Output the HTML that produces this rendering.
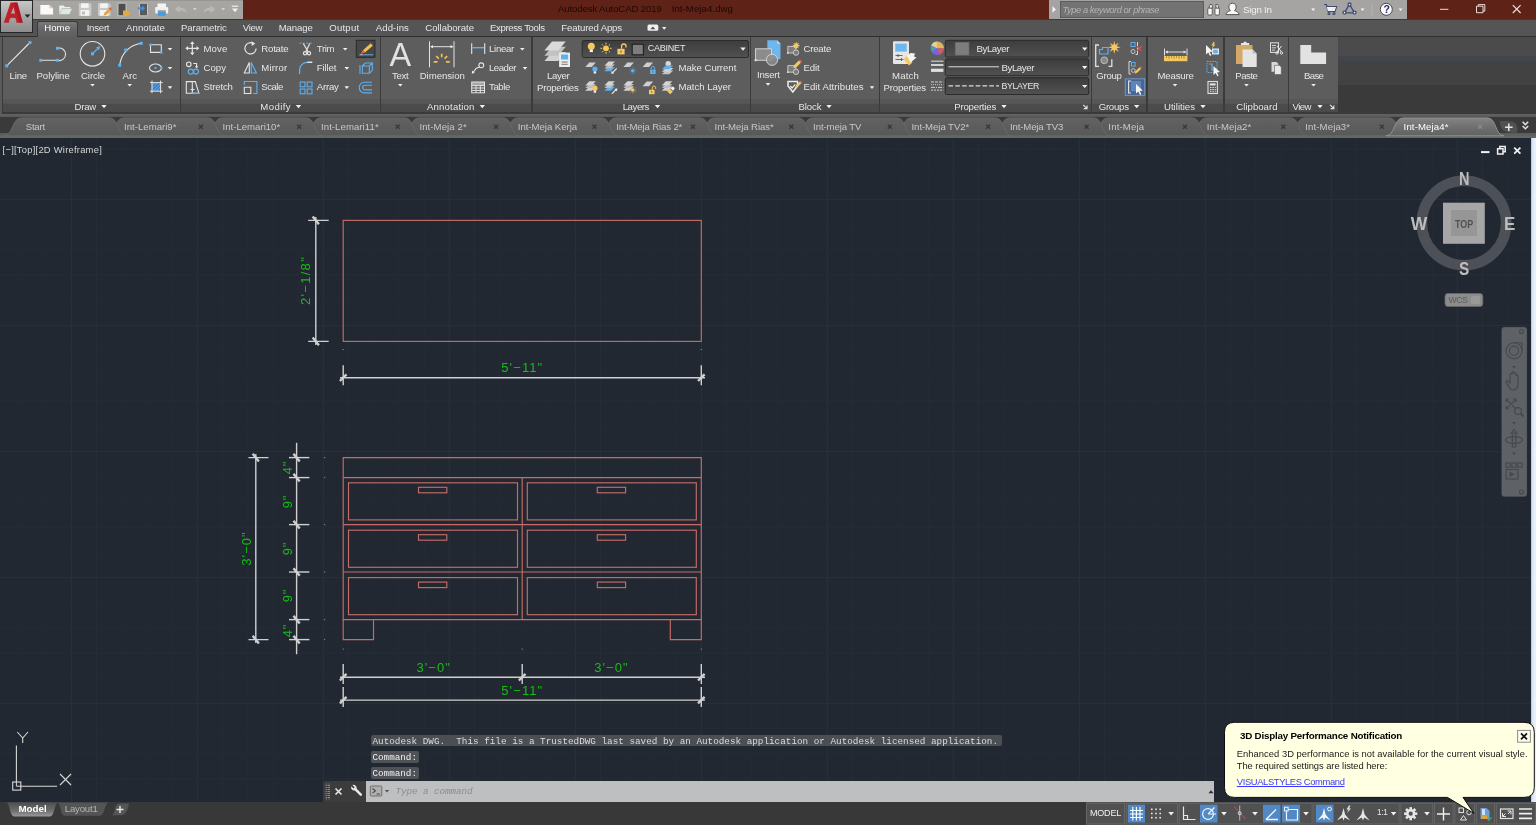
<!DOCTYPE html>
<html>
<head>
<meta charset="utf-8">
<title>Autodesk AutoCAD 2019 - Int-Meja4.dwg</title>
<style>
html,body{margin:0;padding:0;background:#212832;overflow:hidden}
#app{filter:blur(0.4px);position:relative;width:1536px;height:825px;overflow:hidden;background:#212832;font-family:"Liberation Sans",sans-serif}
.a{position:absolute}
.t{position:absolute;white-space:pre;font-family:"Liberation Sans",sans-serif}
.m{font-family:"Liberation Mono",monospace}
svg{position:absolute;overflow:visible}
</style>
</head>
<body>
<div id="app">

<!-- title bar -->
<div class="a" style="left:0;top:0;width:1536px;height:19px;background:#5f2216"></div>
<div class="a" style="left:0;top:19px;width:1536px;height:17px;background:#555555;border-top:1px solid #3a3a3a;box-sizing:border-box"></div>
<!-- quick access toolbar -->
<div class="a" style="left:33px;top:0;width:209.5px;height:18.7px;background:linear-gradient(#8e8e8e,#a8a6a3 8%,#a5a3a0)"></div>
<!-- info center -->
<div class="a" style="left:1048.5px;top:0;width:358px;height:18.5px;background:#a6a4a2"></div>
<div class="a" style="left:1060px;top:1px;width:143.5px;height:16.5px;background:#737373;border:1px solid #5c5c5c;box-sizing:border-box"></div>
<!-- app button -->
<div class="a" style="left:0;top:0;width:32.5px;height:32.5px;background:linear-gradient(#c6c6c6,#a6a6a6 50%,#8c8c8c);border:1px solid #262626;box-sizing:border-box"></div>
<!-- ribbon body -->
<div class="a" style="left:0;top:35.5px;width:1536px;height:78.5px;background:#3a3a3a"></div>
<div class="a" style="left:0;top:35.5px;width:1536px;height:1px;background:#2f2f2f"></div>
<div class="a" style="left:1338px;top:36.5px;width:198px;height:19.5px;background:#4b4b4b"></div>
<div class="a" style="left:1338px;top:56px;width:198px;height:5px;background:#41464c"></div>
<div class="a" style="left:1338px;top:61px;width:198px;height:24px;background:#424242"></div>
<div class="a" style="left:1338px;top:85px;width:198px;height:28px;background:#3a3a3a"></div>
<div class="a" style="left:0;top:36.5px;width:2px;height:77px;background:#5a5a5a"></div>
<!-- home tab -->
<div class="a" style="left:37.4px;top:21.4px;width:40.5px;height:15.2px;background:linear-gradient(#7a7a7a,#686868 45%,#5e5e5e);border:1px solid #3a3a3a;border-bottom:none;border-radius:2.5px 2.5px 0 0;box-sizing:border-box"></div>

<!-- ribbon panels -->
<div class="a" style="left:2.5px;top:36.5px;width:177.5px;height:63px;background:#5d5d5d"></div>
<div class="a" style="left:2.5px;top:99.3px;width:177.5px;height:13.2px;background:linear-gradient(#575757,#565656 34%,#4b4b4b 38%,#4b4b4b 92%,#43474c)"></div>
<div class="a" style="left:181.3px;top:36.5px;width:198.7px;height:63px;background:#5d5d5d"></div>
<div class="a" style="left:181.3px;top:99.3px;width:198.7px;height:13.2px;background:linear-gradient(#575757,#565656 34%,#4b4b4b 38%,#4b4b4b 92%,#43474c)"></div>
<div class="a" style="left:381.3px;top:36.5px;width:150.0px;height:63px;background:#5d5d5d"></div>
<div class="a" style="left:381.3px;top:99.3px;width:150.0px;height:13.2px;background:linear-gradient(#575757,#565656 34%,#4b4b4b 38%,#4b4b4b 92%,#43474c)"></div>
<div class="a" style="left:532.7px;top:36.5px;width:217.3px;height:63px;background:#5d5d5d"></div>
<div class="a" style="left:532.7px;top:99.3px;width:217.3px;height:13.2px;background:linear-gradient(#575757,#565656 34%,#4b4b4b 38%,#4b4b4b 92%,#43474c)"></div>
<div class="a" style="left:751.3px;top:36.5px;width:127.4px;height:63px;background:#5d5d5d"></div>
<div class="a" style="left:751.3px;top:99.3px;width:127.4px;height:13.2px;background:linear-gradient(#575757,#565656 34%,#4b4b4b 38%,#4b4b4b 92%,#43474c)"></div>
<div class="a" style="left:880.0px;top:36.5px;width:211.0px;height:63px;background:#5d5d5d"></div>
<div class="a" style="left:880.0px;top:99.3px;width:211.0px;height:13.2px;background:linear-gradient(#575757,#565656 34%,#4b4b4b 38%,#4b4b4b 92%,#43474c)"></div>
<div class="a" style="left:1092.3px;top:36.5px;width:54.0px;height:63px;background:#5d5d5d"></div>
<div class="a" style="left:1092.3px;top:99.3px;width:54.0px;height:13.2px;background:linear-gradient(#575757,#565656 34%,#4b4b4b 38%,#4b4b4b 92%,#43474c)"></div>
<div class="a" style="left:1147.7px;top:36.5px;width:75.6px;height:63px;background:#5d5d5d"></div>
<div class="a" style="left:1147.7px;top:99.3px;width:75.6px;height:13.2px;background:linear-gradient(#575757,#565656 34%,#4b4b4b 38%,#4b4b4b 92%,#43474c)"></div>
<div class="a" style="left:1224.7px;top:36.5px;width:63.3px;height:63px;background:#5d5d5d"></div>
<div class="a" style="left:1224.7px;top:99.3px;width:63.3px;height:13.2px;background:linear-gradient(#575757,#565656 34%,#4b4b4b 38%,#4b4b4b 92%,#43474c)"></div>
<div class="a" style="left:1289.3px;top:36.5px;width:48.4px;height:63px;background:#5d5d5d"></div>
<div class="a" style="left:1289.3px;top:99.3px;width:48.4px;height:13.2px;background:linear-gradient(#575757,#565656 34%,#4b4b4b 38%,#4b4b4b 92%,#43474c)"></div>

<!-- file tab row -->
<div class="a" style="left:0;top:113.6px;width:1536px;height:3px;background:linear-gradient(#646464,#585858)"></div>
<div class="a" style="left:0;top:116.5px;width:1536px;height:19px;background:#3a3a3a"></div>
<div class="a" style="left:0;top:133px;width:1536px;height:5.3px;background:linear-gradient(#5a5a5a,#686868)"></div>

<svg style="left:0;top:0" width="1536" height="140" viewBox="0 0 1536 140">
<defs><linearGradient id="tg" x1="0" y1="0" x2="0" y2="1"><stop offset="0" stop-color="#626262"/><stop offset="1" stop-color="#585858"/></linearGradient>
<linearGradient id="tga" x1="0" y1="0" x2="0" y2="1"><stop offset="0" stop-color="#848484"/><stop offset="0.5" stop-color="#707070"/><stop offset="1" stop-color="#626262"/></linearGradient></defs>
<path d="M1287.5 135.8 C1297.1 135.8 1295.1 117.9 1304.8 117.9 L1389.2 117.9 C1398.4 117.9 1396.4 135.8 1405.7 135.8 Z" fill="url(#tg)" stroke="#6a6a6a" stroke-width="0.9"/>
<path d="M1189.0 135.8 C1198.7 135.8 1196.7 117.9 1206.3 117.9 L1290.7 117.9 C1300.0 117.9 1298.0 135.8 1307.2 135.8 Z" fill="url(#tg)" stroke="#6a6a6a" stroke-width="0.9"/>
<path d="M1090.6 135.8 C1100.3 135.8 1098.3 117.9 1107.9 117.9 L1192.3 117.9 C1201.6 117.9 1199.6 135.8 1208.8 135.8 Z" fill="url(#tg)" stroke="#6a6a6a" stroke-width="0.9"/>
<path d="M992.2 135.8 C1001.9 135.8 999.9 117.9 1009.5 117.9 L1093.9 117.9 C1103.2 117.9 1101.2 135.8 1110.4 135.8 Z" fill="url(#tg)" stroke="#6a6a6a" stroke-width="0.9"/>
<path d="M893.8 135.8 C903.4 135.8 901.4 117.9 911.1 117.9 L995.5 117.9 C1004.7 117.9 1002.7 135.8 1012.0 135.8 Z" fill="url(#tg)" stroke="#6a6a6a" stroke-width="0.9"/>
<path d="M795.4 135.8 C805.0 135.8 803.0 117.9 812.7 117.9 L897.1 117.9 C906.3 117.9 904.3 135.8 913.6 135.8 Z" fill="url(#tg)" stroke="#6a6a6a" stroke-width="0.9"/>
<path d="M696.9 135.8 C706.6 135.8 704.6 117.9 714.2 117.9 L798.6 117.9 C807.9 117.9 805.9 135.8 815.1 135.8 Z" fill="url(#tg)" stroke="#6a6a6a" stroke-width="0.9"/>
<path d="M598.5 135.8 C608.2 135.8 606.2 117.9 615.8 117.9 L700.2 117.9 C709.5 117.9 707.5 135.8 716.7 135.8 Z" fill="url(#tg)" stroke="#6a6a6a" stroke-width="0.9"/>
<path d="M500.1 135.8 C509.8 135.8 507.8 117.9 517.4 117.9 L601.8 117.9 C611.1 117.9 609.1 135.8 618.3 135.8 Z" fill="url(#tg)" stroke="#6a6a6a" stroke-width="0.9"/>
<path d="M401.7 135.8 C411.3 135.8 409.3 117.9 419.0 117.9 L503.4 117.9 C512.6 117.9 510.6 135.8 519.9 135.8 Z" fill="url(#tg)" stroke="#6a6a6a" stroke-width="0.9"/>
<path d="M303.3 135.8 C312.9 135.8 310.9 117.9 320.6 117.9 L405.0 117.9 C414.2 117.9 412.2 135.8 421.5 135.8 Z" fill="url(#tg)" stroke="#6a6a6a" stroke-width="0.9"/>
<path d="M204.8 135.8 C214.5 135.8 212.5 117.9 222.1 117.9 L306.5 117.9 C315.8 117.9 313.8 135.8 323.0 135.8 Z" fill="url(#tg)" stroke="#6a6a6a" stroke-width="0.9"/>
<path d="M106.4 135.8 C116.1 135.8 114.1 117.9 123.7 117.9 L208.1 117.9 C217.4 117.9 215.4 135.8 224.6 135.8 Z" fill="url(#tg)" stroke="#6a6a6a" stroke-width="0.9"/>
<path d="M3.7 135.8 C13.5 135.8 11.5 117.9 21.3 117.9 L109.7 117.9 C119.0 117.9 117.0 135.8 126.2 135.8 Z" fill="url(#tg)" stroke="#6a6a6a" stroke-width="0.9"/>
<path d="M1385.9 135.8 C1395.5 135.8 1393.5 117.9 1403.2 117.9 L1487.6 117.9 C1496.8 117.9 1494.8 135.8 1504.1 135.8 Z" fill="url(#tga)" stroke="#969696" stroke-width="0.9"/>
<path d="M198.8 124.8 l4 4 m0 -4 l-4 4" stroke="#383838" stroke-width="1.35" fill="none"/>
<path d="M297.2 124.8 l4 4 m0 -4 l-4 4" stroke="#383838" stroke-width="1.35" fill="none"/>
<path d="M395.7 124.8 l4 4 m0 -4 l-4 4" stroke="#383838" stroke-width="1.35" fill="none"/>
<path d="M494.1 124.8 l4 4 m0 -4 l-4 4" stroke="#383838" stroke-width="1.35" fill="none"/>
<path d="M592.5 124.8 l4 4 m0 -4 l-4 4" stroke="#383838" stroke-width="1.35" fill="none"/>
<path d="M690.9 124.8 l4 4 m0 -4 l-4 4" stroke="#383838" stroke-width="1.35" fill="none"/>
<path d="M789.3 124.8 l4 4 m0 -4 l-4 4" stroke="#383838" stroke-width="1.35" fill="none"/>
<path d="M887.8 124.8 l4 4 m0 -4 l-4 4" stroke="#383838" stroke-width="1.35" fill="none"/>
<path d="M986.2 124.8 l4 4 m0 -4 l-4 4" stroke="#383838" stroke-width="1.35" fill="none"/>
<path d="M1084.6 124.8 l4 4 m0 -4 l-4 4" stroke="#383838" stroke-width="1.35" fill="none"/>
<path d="M1183.0 124.8 l4 4 m0 -4 l-4 4" stroke="#383838" stroke-width="1.35" fill="none"/>
<path d="M1281.4 124.8 l4 4 m0 -4 l-4 4" stroke="#383838" stroke-width="1.35" fill="none"/>
<path d="M1379.9 124.8 l4 4 m0 -4 l-4 4" stroke="#383838" stroke-width="1.35" fill="none"/>
<path d="M1478.3 124.8 l4 4 m0 -4 l-4 4" stroke="#8a8a8a" stroke-width="1.35" fill="none"/>
<path d="M1499.5 121.3 C1506 120.5 1514 120.8 1516 124 C1518 127 1518 131 1516.5 132.8 C1510 133.2 1504 132.5 1502 129 C1500.5 126 1500 123 1499.5 121.3 Z" fill="#515151"/>
<path d="M1505 127.3 h7.6 m-3.8 -3.8 v7.6" stroke="#e6e6e6" stroke-width="1.5" fill="none"/>
<path d="M1522.6 121.8 l2.8 2.8 l2.8 -2.8 M1522.6 126 l2.8 2.8 l2.8 -2.8" stroke="#e0e0e0" stroke-width="1.5" fill="none"/>
</svg>

<svg style="left:0;top:0" width="1536" height="40" viewBox="0 0 1536 40">
<!-- app A -->
<path fill-rule="evenodd" d="M3.8 22.7 L10.6 2.6 H17.4 L22.8 22.7 H16.6 L15.8 18.4 C13.8 17.4 11.8 17.5 9.8 18.4 L8.8 22.7 Z M10.9 13.9 C12.4 13.4 13.7 13.4 15 13.9 L13.5 7.2 Z" fill="#bf2129"/>
<path d="M13.6 2.6 H17.4 L22.8 22.7 H19.6 Z" fill="#9a121a" opacity="0.5"/>
<path d="M24.6 14.4h5.8l-2.9 3.3z" fill="#222"/>
<!-- new -->
<path d="M40.3 5h9l3.8 3.2v6.3h-12.8z" fill="#fafafa"/><path d="M49.3 5v3.2h3.8z" fill="#cfcfcf"/>
<!-- open -->
<path d="M59.3 14.5v-9h4.4l1.2 1.5h5.3v2" fill="#e9efe9"/><path d="M59.3 14.5l2.7 -6h10.3l-2.8 6z" fill="#dfe8df" stroke="#9aa39a" stroke-width="0.5"/>
<!-- save -->
<path d="M78.8 3.3h11.4l1.2 1.2v11.3h-12.6z" fill="#c9c9c9"/><rect x="81" y="3.3" width="7.6" height="4.6" fill="#f4f4f4"/><rect x="80.6" y="10" width="8.6" height="5.8" fill="#f4f4f4"/><rect x="82" y="11.5" width="3" height="3" fill="#bdbdbd"/>
<!-- save as -->
<path d="M98 3.3h11.4l1.2 1.2v11.3h-12.6z" fill="#c9c9c9"/><rect x="100.2" y="3.3" width="7.6" height="4.6" fill="#f4f4f4"/><rect x="99.8" y="10" width="8.6" height="5.8" fill="#f4f4f4"/><path d="M103.5 15.8l1 -3l5.2 -5.2l2 2l-5.2 5.2z" fill="#e8a23c"/><path d="M109 8.2l1 -1l2 2l-1 1z" fill="#d15a4a"/>
<!-- open from mobile -->
<rect x="118" y="3.2" width="8" height="12.6" rx="1" fill="#4e4e4e" stroke="#d8d8d8" stroke-width="0.8"/><path d="M123 15.5v-5h2.6l0.8 1h3.2v4z" fill="#e6a93c"/>
<!-- save to mobile -->
<rect x="139.5" y="3.2" width="8" height="12.6" rx="1" fill="#5a5a5a" stroke="#d8d8d8" stroke-width="0.8"/><path d="M137.8 7.2h4.2v-1.8l3.2 2.9l-3.2 2.9v-1.8h-4.2z" fill="#3f8fde"/>
<!-- plot -->
<rect x="157.5" y="3.5" width="8.5" height="4" fill="#f4f4f4"/><rect x="155.2" y="7" width="13" height="6.5" rx="1" fill="#f0f0f0"/><rect x="157.8" y="11.2" width="8" height="4.6" fill="#4a9ae0"/><rect x="157.8" y="10.2" width="8" height="1.2" fill="#9a9a9a"/>
<!-- undo/redo -->
<path d="M175 9.3l4.6 -4v2.4c4 0 6.6 1.8 7 5.3c-1.6 -2 -3.8 -2.7 -7 -2.5v2.6z" fill="#b9b9b9"/>
<path d="M215.2 9.3l-4.6 -4v2.4c-4 0 -6.6 1.8 -7 5.3c1.6 -2 3.8 -2.7 7 -2.5v2.6z" fill="#b9b9b9"/>
<path d="M192.8 8h4l-2 2.4z M221.2 8h4l-2 2.4z" fill="#d0d0d0"/>
<path d="M231.8 6.2h6.4" stroke="#f0f0f0" stroke-width="1.2"/><path d="M231.8 8.6h6.4l-3.2 3.6z" fill="#f0f0f0"/>
<!-- info center icons -->
<path d="M1052.5 6.2v6.6l3.4 -3.3z" fill="#f4f4f4"/>
<g fill="#f8f8f8" stroke="#3a3a3a" stroke-width="0.7"><rect x="1207.8" y="8" width="4.4" height="7" rx="1"/><rect x="1215" y="8" width="4.4" height="7" rx="1"/><path d="M1209 8l1 -3.5h2l0.6 3.5z M1216.2 8l-0.4 -3.5h2l1 3.5z"/></g>
<path d="M1232.5 3.2c2.4 0 3.6 1.6 3.6 3.8c0 1.8 -0.8 3 -1.6 3.6c2.2 0.6 4.4 1.8 4.6 4h-13.2c0.2 -2.2 2.4 -3.4 4.6 -4c-0.8 -0.6 -1.6 -1.8 -1.6 -3.6c0 -2.2 1.2 -3.8 3.6 -3.8z" fill="#f8f8f8" stroke="#3a3a3a" stroke-width="0.8"/>
<path d="M1311.2 8.5h4l-2 2.4z M1360.5 8.5h4l-2 2.4z M1398.5 8.5h4l-2 2.4z" fill="#f4f4f4"/>
<g fill="none" stroke="#3c4a78" stroke-width="1.2"><path d="M1324 4.5h2.4l1.6 7h7l1.6 -5h-9.6"/><circle cx="1329" cy="13.5" r="1"/><circle cx="1334" cy="13.5" r="1"/></g>
<path d="M1326.8 7h9.2l-1.4 4h-6.8z" fill="#f0f0f0"/>
<g fill="none" stroke="#3c4a78" stroke-width="1.3"><path d="M1349.5 4.2l-5 8.6h10z"/><circle cx="1349.5" cy="4.5" r="1.5" fill="#f0f0f0"/><circle cx="1344.5" cy="12.6" r="1.5" fill="#f0f0f0"/><circle cx="1354.5" cy="12.6" r="1.5" fill="#f0f0f0"/></g>
<rect x="1371.5" y="3.5" width="1" height="12" fill="#b4b4b4"/>
<circle cx="1386.3" cy="9.3" r="6" fill="#fafafa" stroke="#3a3a4a" stroke-width="0.9"/>
<!-- window buttons -->
<path d="M1440 9.3h8.4" stroke="#e8dcd8" stroke-width="1"/>
<path d="M1476.5 6.2h6.5v6.5h-6.5z M1478.3 6.2v-1.6h6.5v6.5h-1.8" fill="none" stroke="#e8dcd8" stroke-width="1"/>
<path d="M1512.8 5.2l7.8 7.8 m0 -7.8l-7.8 7.8" stroke="#f0e6e2" stroke-width="1.1" fill="none"/>
<!-- featured apps icon -->
<rect x="647.5" y="24.6" width="10.8" height="6.2" rx="1.5" fill="#f0f0f0"/><path d="M650.5 29.3h4.8l-2.4 -2.8z" fill="#4a4a4a"/><path d="M662 27h4.4l-2.2 2.7z" fill="#f0f0f0"/>
</svg>

<svg style="left:0;top:0" width="1536" height="140" viewBox="0 0 1536 140">
<g fill="none" stroke="#e4e4e4" stroke-width="1.1">
<path d="M6.7 65.8L30 42.5"/>
<path d="M40.8 60.3H57.5A6.27 6.27 0 1 0 57.5 48.3"/>
<circle cx="92.5" cy="53.8" r="12.3"/>
<path d="M119.7 65.3C121 54 129 45 141.3 43.3"/>
<path d="M150.5 44.8h10.8v7.6h-10.8z"/>
<ellipse cx="155.5" cy="68" rx="6" ry="4"/>
</g>
<rect x="5.2" y="64.3" width="3.0" height="3.0" fill="#5fb0ee"/><rect x="28.5" y="41.0" width="3.0" height="3.0" fill="#5fb0ee"/><rect x="39.3" y="58.8" width="3.0" height="3.0" fill="#5fb0ee"/><rect x="56.0" y="58.8" width="3.0" height="3.0" fill="#5fb0ee"/><rect x="56.0" y="46.8" width="3.0" height="3.0" fill="#5fb0ee"/><rect x="91.0" y="52.3" width="3.0" height="3.0" fill="#5fb0ee"/><rect x="118.2" y="63.8" width="3.0" height="3.0" fill="#5fb0ee"/><rect x="124.3" y="48.5" width="3.0" height="3.0" fill="#5fb0ee"/><rect x="139.8" y="41.8" width="3.0" height="3.0" fill="#5fb0ee"/>
<rect x="149.3" y="43.6" width="2.4" height="2.4" fill="#5fb0ee"/><rect x="160.1" y="51.2" width="2.4" height="2.4" fill="#5fb0ee"/><rect x="154.5" y="67.0" width="2.0" height="2.0" fill="#5fb0ee"/><rect x="154.5" y="63.0" width="2.0" height="2.0" fill="#5fb0ee"/><rect x="160.5" y="67.0" width="2.0" height="2.0" fill="#5fb0ee"/>
<path d="M92.5 53.8L99 47.3" stroke="#5fb0ee" stroke-width="1.3"/><path d="M100.3 46l-4.2 1.2l3 3z" fill="#5fb0ee"/>
<rect x="152" y="82.6" width="8.6" height="8.6" fill="#3f7fc4"/><path d="M152 85.6l3-3 M152 88.6l6-6 M153 91.2l7.6-7.6 M156 91.2l4.6-4.6" stroke="#7db9f0" stroke-width="0.7"/>
<path d="M150 82.6h12.6 M150 91.2h12.6 M152 80.6v12.6 M160.6 80.6v12.6" stroke="#e4e4e4" stroke-width="1" fill="none"/>
<path d="M167.7 47.9h4.6l-2.3 2.7z" fill="#f0f0f0"/><path d="M167.7 66.9h4.6l-2.3 2.7z" fill="#f0f0f0"/><path d="M167.7 86.2h4.6l-2.3 2.7z" fill="#f0f0f0"/><path d="M90.2 83.9h4.6l-2.3 2.7z" fill="#f0f0f0"/><path d="M127.4 83.9h4.6l-2.3 2.7z" fill="#f0f0f0"/><path d="M101.3 105.0h5.4l-2.7 3.2z" fill="#f0f0f0"/>
<g fill="none" stroke="#e4e4e4" stroke-width="1.2"><path d="M186.5 48.3h11.6M192.3 42.5v11.6"/></g>
<path d="M192.3 41.3l2.3 2.8h-4.6z M192.3 55.3l2.3 -2.8h-4.6z M185.3 48.3l2.8 -2.3v4.6z M199.3 48.3l-2.8 -2.3v4.6z" fill="#e4e4e4"/>
<circle cx="188.8" cy="64.3" r="2.3" fill="none" stroke="#e4e4e4" stroke-width="1.1"/>
<path d="M193.3 63.5h3.3v3.5" fill="none" stroke="#e4e4e4" stroke-width="1.1"/><path d="M196.6 68.4l1.7 -2.2h-3.4z" fill="#e4e4e4"/>
<circle cx="190.8" cy="71.6" r="2.5" fill="none" stroke="#5fb0ee" stroke-width="1.2"/><circle cx="196" cy="71.6" r="2.5" fill="none" stroke="#5fb0ee" stroke-width="1.2"/>
<path d="M186.3 81.6h6v11.6h-6z" fill="none" stroke="#e4e4e4" stroke-width="1.1"/><path d="M192.3 81.6h3l3.6 11.6h-6.6" fill="none" stroke="#e4e4e4" stroke-width="1.1"/><path d="M192.3 93.2h6.6" stroke="#5fb0ee" stroke-width="1.2"/><path d="M190.5 89.5h4m-2 -2v4" stroke="#e4e4e4" stroke-width="1"/>
<path d="M253.5 43.6A5.6 5.6 0 1 0 256.1 48.5" fill="none" stroke="#e4e4e4" stroke-width="1.2"/><path d="M251.3 41.2l4 2.2l-3.4 2.6z" fill="#e4e4e4"/>
<path d="M249.3 62.5v10.5h-5z" fill="none" stroke="#e4e4e4" stroke-width="1.1"/><path d="M251.3 62.5v10.5h5z" fill="none" stroke="#5fb0ee" stroke-width="1.2"/>
<path d="M244.3 87.3h6.5v6.2h-6.5z" fill="none" stroke="#e4e4e4" stroke-width="1.1"/><path d="M244.3 85v-3.5h12.6v12h-3.8" fill="none" stroke="#5fb0ee" stroke-width="1.1"/>
<path d="M299.5 43.2h13" stroke="#5fb0ee" stroke-width="1" stroke-dasharray="2 1.4"/>
<g fill="none" stroke="#e4e4e4" stroke-width="1.2"><path d="M303.3 43.5l5 8.5 M309.8 43.5l-4.2 8.5"/><circle cx="305" cy="53.3" r="1.6"/><circle cx="309" cy="53.3" r="1.6"/></g>
<path d="M299.6 74V70A7.6 7.6 0 0 1 307.2 62.4" fill="none" stroke="#5fb0ee" stroke-width="1.3"/><path d="M307.2 62.4h5 M299.6 74v-0.1" stroke="#e4e4e4" stroke-width="1.2"/><path d="M307.5 62.3h4.7" stroke="#e4e4e4" stroke-width="1.2"/>
<rect x="300.2" y="82.0" width="4.8" height="4.8" fill="none" stroke="#5fb0ee" stroke-width="1.1"/>
<rect x="307.2" y="82.0" width="4.8" height="4.8" fill="none" stroke="#5fb0ee" stroke-width="1.1"/>
<rect x="300.2" y="89.0" width="4.8" height="4.8" fill="none" stroke="#5fb0ee" stroke-width="1.1"/>
<rect x="307.2" y="89.0" width="4.8" height="4.8" fill="none" stroke="#5fb0ee" stroke-width="1.1"/>
<path d="M342.9 47.9h4.6l-2.3 2.7z" fill="#f0f0f0"/><path d="M344.5 67.0h4.6l-2.3 2.7z" fill="#f0f0f0"/><path d="M344.5 86.2h4.6l-2.3 2.7z" fill="#f0f0f0"/><path d="M295.8 105.0h5.4l-2.7 3.2z" fill="#f0f0f0"/>
<rect x="356.3" y="40.3" width="18.6" height="17" fill="#474747" stroke="#2a2a2a" stroke-width="1"/>
<path d="M361 53.5l2.2 -3.6l7.6 -6.6l2 2.4l-7.6 6.6z" fill="#f2c14e"/><path d="M361 53.5l2.2 -3.6l2 2.4z" fill="#e05a5a"/><path d="M359.5 54.8h4" stroke="#c8c8c8" stroke-width="1"/><path d="M364 54.8h9" stroke="#5fb0ee" stroke-width="1"/>
<g fill="none" stroke="#5fb0ee" stroke-width="1.1"><path d="M362.3 66h7v7.3h-7z M362.3 66l3 -3h7l-3 3 M372.3 63v7.3l-3 3"/><path d="M360 65v9" /></g>
<g fill="none" stroke="#5fb0ee" stroke-width="1.1"><path d="M372 82.3h-7.5a5.3 5.3 0 0 0 0 10.6h7.5"/><path d="M372 85.3h-7a2.3 2.3 0 0 0 0 4.6h7"/></g>
<g fill="none" stroke="#e4e4e4" stroke-width="1"><path d="M429.5 41.3v26 M454 41.3v26 M431 46.7h21.5"/></g>
<path d="M430 46.7l3 -1.6v3.2z M453.5 46.7l-3 -1.6v3.2z" fill="#e4e4e4"/>
<g stroke="#f2c14e" stroke-width="1.7"><path d="M441.7 57.3v-3.6 M438.8 58.6l-2.6 -2.6 M444.6 58.6l2.6 -2.6 M437.5 61.8h-3.8 M446 61.8h3.8"/></g>
<path d="M471.7 43.3v10.8 M484.7 43.3v10.8" stroke="#e4e4e4" stroke-width="1.1"/><path d="M472.5 47.7h11.5" stroke="#5fb0ee" stroke-width="1.4"/>
<circle cx="481.3" cy="65.3" r="2.4" fill="none" stroke="#e4e4e4" stroke-width="1.1"/><path d="M479.5 67l-3.5 1.5l-3 4.3" fill="none" stroke="#e4e4e4" stroke-width="1.1"/><path d="M471.8 74l0.4 -3.4l2.6 1.9z" fill="#e4e4e4"/>
<g fill="none" stroke="#e4e4e4" stroke-width="1"><rect x="471.7" y="82" width="12.8" height="10.8"/><path d="M471.7 85.6h12.8 M471.7 88h12.8 M471.7 90.4h12.8 M476 85.6v7.2 M480.3 85.6v7.2"/></g><rect x="471.7" y="82" width="12.8" height="3.2" fill="#e4e4e4" opacity="0.55"/>
<path d="M398.0 83.9h4.6l-2.3 2.7z" fill="#f0f0f0"/><path d="M520.0 47.9h4.6l-2.3 2.7z" fill="#f0f0f0"/><path d="M522.7 67.0h4.6l-2.3 2.7z" fill="#f0f0f0"/><path d="M479.6 105.0h5.4l-2.7 3.2z" fill="#f0f0f0"/>
</svg>

<svg style="left:0;top:0" width="1536" height="140" viewBox="0 0 1536 140">
<defs><linearGradient id="cg" x1="0" y1="0" x2="0" y2="1"><stop offset="0" stop-color="#3d3d3d"/><stop offset="0.5" stop-color="#474747"/><stop offset="1" stop-color="#515151"/></linearGradient></defs>
<path d="M552.0 52.0h13.8l-7.6 9.0h-13.8z" fill="#d2d2d2"/><path d="M552.0 46.7h13.8l-7.6 9.0h-13.8z" fill="#c2c2c2"/><path d="M552.0 41.4h13.8l-7.6 9.2h-13.8z" fill="#dadada"/>
<rect x="559.1" y="52.6" width="10.9" height="14.4" fill="#ececec"/><rect x="561" y="54.5" width="7.1" height="5" fill="#5fb0ee"/><path d="M561.5 62h6.2 M561.5 64.3h6.2" stroke="#6a6a6a" stroke-width="0.9"/>
<rect x="582.2" y="40.5" width="166.3" height="17" rx="1.5" fill="url(#cg)" stroke="#2b2b2b" stroke-width="1"/>
<circle cx="591.3" cy="46.3" r="3.5" fill="#f5c860"/><rect x="589.7" y="49.4" width="3.2" height="2.7" fill="#f4f4f4"/><circle cx="606.0" cy="48.3" r="2.9" fill="#f5c860"/><path d="M609.8 48.3L611.6 48.3M608.7 51.0L610.0 52.3M606.0 52.1L606.0 53.9M603.3 51.0L602.0 52.3M602.2 48.3L600.4 48.3M603.3 45.6L602.0 44.3M606.0 44.5L606.0 42.7M608.7 45.6L610.0 44.3" stroke="#f5c860" stroke-width="1.0"/><rect x="617.4" y="48.8" width="7.2" height="5.6" fill="#f5c860"/><path d="M621.6 48.8v-2.6a2.2 2.2 0 0 1 4.4 0v1.4" fill="none" stroke="#f5c860" stroke-width="1.3"/><rect x="620.4" y="50.5" width="1.2" height="2.2" fill="#8a6a20"/>
<rect x="632.2" y="44.2" width="11.2" height="10.6" fill="#7d7d7d" stroke="#232323" stroke-width="1.2"/>
<path d="M740.3 47.6h5.4l-2.7 3.2z" fill="#f0f0f0"/>
<path d="M589.3 62.4h6.5l-4.0 4.7h-6.5z" fill="#cfcfcf"/><circle cx="594.9" cy="69.0" r="2.6" fill="#5fb0ee"/><rect x="593.7" y="71.4" width="2.4" height="2.1" fill="#f4f4f4"/>
<path d="M608.4 67.0h6.5l-4.0 4.2h-6.5z" fill="#5fb0ee"/><path d="M608.4 64.3h6.5l-4.0 4.2h-6.5z" fill="#bcbcbc"/><path d="M608.4 61.6h6.5l-4.0 4.2h-6.5z" fill="#d4d4d4"/>
<path d="M616.7 68.4l-4 4.2" stroke="#ececec" stroke-width="1.2"/><path d="M611.3 74.0l0.3 -3.2l2.6 2.4z" fill="#ececec"/>
<path d="M627.4 62.4h6.5l-4.0 4.7h-6.5z" fill="#cfcfcf"/><circle cx="632.7" cy="70.7" r="1.8" fill="#5fb0ee"/><path d="M635.1 70.7L636.2 70.7M634.4 72.4L635.2 73.2M632.7 73.1L632.7 74.2M631.0 72.4L630.2 73.2M630.3 70.7L629.2 70.7M631.0 69.0L630.2 68.2M632.7 68.3L632.7 67.2M634.4 69.0L635.2 68.2" stroke="#5fb0ee" stroke-width="0.6"/>
<path d="M646.6 62.4h6.5l-4.0 4.7h-6.5z" fill="#cfcfcf"/><rect x="650.1" y="69.6" width="5.6" height="4.4" fill="#5fb0ee"/><path d="M651.2 69.6v-1.4a1.7 1.7 0 0 1 3.4 0v1.4" fill="none" stroke="#5fb0ee" stroke-width="1.0"/><rect x="652.4" y="70.9" width="0.9" height="1.7" fill="#8a6a20"/>
<circle cx="668.2" cy="63.7" r="2.7" fill="#d8d8d8"/>
<path d="M665.8 70.6h7.5l-4.0 3.6h-7.5z" fill="#c4c4c4"/><path d="M665.8 68.1h7.5l-4.0 3.6h-7.5z" fill="#d4d4d4"/><path d="M665.8 65.6h7.5l-4.0 3.6h-7.5z" fill="#5fb0ee"/>
<path d="M589.3 86.6h6.5l-4.0 4.2h-6.5z" fill="#d0d0d0"/><path d="M589.3 83.9h6.5l-4.0 4.2h-6.5z" fill="#bcbcbc"/><path d="M589.3 81.2h6.5l-4.0 4.2h-6.5z" fill="#d4d4d4"/><circle cx="594.9" cy="88.2" r="2.6" fill="#f5c860"/><rect x="593.7" y="90.6" width="2.4" height="2.1" fill="#f4f4f4"/>
<path d="M608.4 86.6h6.5l-4.0 4.2h-6.5z" fill="#5fb0ee"/><path d="M608.4 83.9h6.5l-4.0 4.2h-6.5z" fill="#bcbcbc"/><path d="M608.4 81.2h6.5l-4.0 4.2h-6.5z" fill="#d4d4d4"/>
<path d="M611.9 93.8l4.2 -4.4" stroke="#ececec" stroke-width="1.2"/><path d="M617.3 88.2l-0.3 3.2l-2.6 -2.4z" fill="#ececec"/>
<path d="M627.4 86.6h6.5l-4.0 4.2h-6.5z" fill="#d0d0d0"/><path d="M627.4 83.9h6.5l-4.0 4.2h-6.5z" fill="#bcbcbc"/><path d="M627.4 81.2h6.5l-4.0 4.2h-6.5z" fill="#d4d4d4"/><circle cx="632.7" cy="90.0" r="1.8" fill="#f5c860"/><path d="M635.1 90.0L636.2 90.0M634.4 91.7L635.2 92.5M632.7 92.4L632.7 93.5M631.0 91.7L630.2 92.5M630.3 90.0L629.2 90.0M631.0 88.3L630.2 87.5M632.7 87.6L632.7 86.5M634.4 88.3L635.2 87.5" stroke="#f5c860" stroke-width="0.6"/>
<path d="M646.6 81.6h6.5l-4.0 4.7h-6.5z" fill="#cfcfcf"/><rect x="649.0" y="89.8" width="5.6" height="4.4" fill="#f5c860"/><path d="M652.3 89.8v-2.0a1.7 1.7 0 0 1 3.4 0v1.1" fill="none" stroke="#f5c860" stroke-width="1.0"/><rect x="651.3" y="91.1" width="0.9" height="1.7" fill="#8a6a20"/>
<path d="M665.8 86.6h6.5l-4.0 4.2h-6.5z" fill="#d0d0d0"/><path d="M665.8 83.9h6.5l-4.0 4.2h-6.5z" fill="#bcbcbc"/><path d="M665.8 81.2h6.5l-4.0 4.2h-6.5z" fill="#d4d4d4"/>
<path d="M669.8 88.7l3 3l-2.6 2.6l-3 -3z" fill="#f5c860"/><path d="M670.4 88.2l2.6 -1.8l1.8 1.8l-1.8 2.6z" fill="#f4f4f4"/>
<path d="M654.8 105.0h5.4l-2.7 3.2z" fill="#f0f0f0"/>
<path d="M767.3 40.3h9.8l3.4 3.4v15.5h-13.2z" fill="#6db6ee"/><path d="M777.1 40.3v3.4h3.4z" fill="#b8dcf6"/>
<rect x="755.5" y="48.8" width="16" height="11.5" fill="#8c8c8c" stroke="#d8d8d8" stroke-width="0.9"/><circle cx="772" cy="59.8" r="5.6" fill="#8c8c8c" fill-opacity="0.85" stroke="#d8d8d8" stroke-width="0.9"/><rect x="754.6" y="59.2" width="2" height="2" fill="#e8e8e8"/>
<path d="M765.7 83.0h4.6l-2.3 2.7z" fill="#f0f0f0"/>
<path d="M787.8 46.4h8v6.6h-8z" fill="#7c7c7c" stroke="#d0d0d0" stroke-width="0.9"/><circle cx="796.0" cy="52.6" r="2.7" fill="#7c7c7c" stroke="#d0d0d0" stroke-width="0.9"/><rect x="787.0" y="52.2" width="1.6" height="1.6" fill="#e0e0e0"/>
<path d="M796.2 41.6L797.0 43.8L799.0 42.8L798.0 44.8L800.2 45.6L798.0 46.4L799.0 48.4L797.0 47.4L796.2 49.6L795.4 47.4L793.4 48.4L794.4 46.4L792.2 45.6L794.4 44.8L793.4 42.8L795.4 43.8z" fill="#f5c860"/>
<path d="M787.8 65.6h8v6.6h-8z" fill="#7c7c7c" stroke="#d0d0d0" stroke-width="0.9"/><circle cx="796.0" cy="71.8" r="2.7" fill="#7c7c7c" stroke="#d0d0d0" stroke-width="0.9"/><rect x="787.0" y="71.4" width="1.6" height="1.6" fill="#e0e0e0"/>
<path d="M793.2 68.2l0.8 -3l4.8 -4.8l2.2 2.2l-4.8 4.8z" fill="#f5c860"/><path d="M798.8 60.4l1.2 -1.2l2.2 2.2l-1.2 1.2z" fill="#e05a5a"/>
<path d="M788 81.5h9.5v4.5l-4.7 6l-4.8 -6z" fill="none" stroke="#ececec" stroke-width="1.5"/><path d="M790.3 86l1.8 2l3.2 -3.6" fill="none" stroke="#ececec" stroke-width="1.2"/><path d="M794.5 88.5l1 -2.6l4.3 -4.3l1.6 1.6l-4.3 4.3z" fill="#f5c860"/><path d="M799.8 81.6l1 -1l1.6 1.6l-1 1z" fill="#e05a5a"/>
<path d="M869.7 86.2h4.6l-2.3 2.7z" fill="#f0f0f0"/><path d="M826.3 105.0h5.4l-2.7 3.2z" fill="#f0f0f0"/>
<rect x="893" y="41.3" width="16" height="22.6" rx="1" fill="#e6e6e6"/><rect x="895.3" y="43.6" width="11.4" height="8" fill="#6db6ee"/><path d="M895.5 55.5h7 M895.5 59.5h8 M898 54v3 M901.5 58v3" stroke="#5a5a5a" stroke-width="0.9"/>
<path d="M903.5 59l5.5 6.5l3.5 -3l-5.5 -6.5z" fill="#f5c860"/><path d="M907 56l3.5 -3l4.5 0.5l-1 3l2.5 1l-6 5z" fill="#f4f4f4"/>
<circle cx="937.2" cy="48.2" r="6.6" fill="#4b8fd6"/><path d="M937.2 48.2L937.2 41.6A6.6 6.6 0 0 1 943.8 48.2Z" fill="#e8b45a"/><path d="M937.2 48.2L943.8 48.2A6.6 6.6 0 0 1 939.5 54.4Z" fill="#d65a5a"/><path d="M937.2 48.2L939.5 54.4A6.6 6.6 0 0 1 932 52.3Z" fill="#8a5ad6"/><path d="M937.2 48.2L931.2 45.5A6.6 6.6 0 0 1 937.2 41.6Z" fill="#e6d08a"/><circle cx="933" cy="48.5" r="0.8" fill="#3fbf3f"/>
<rect x="945.3" y="40.3" width="143.4" height="16.8" rx="1.5" fill="url(#cg)" stroke="#2b2b2b" stroke-width="1"/>
<path d="M1082.0 47.5h5.4l-2.7 3.2z" fill="#f0f0f0"/>
<rect x="945.3" y="58.9" width="143.4" height="16.8" rx="1.5" fill="url(#cg)" stroke="#2b2b2b" stroke-width="1"/>
<path d="M1082.0 66.1h5.4l-2.7 3.2z" fill="#f0f0f0"/>
<rect x="945.3" y="77.7" width="143.4" height="16.8" rx="1.5" fill="url(#cg)" stroke="#2b2b2b" stroke-width="1"/>
<path d="M1082.0 84.9h5.4l-2.7 3.2z" fill="#f0f0f0"/>
<rect x="955.2" y="42.3" width="13.8" height="12.8" fill="#7d7d7d" stroke="#6a6a6a" stroke-width="0.6"/>
<path d="M948.5 66.8h50.5" stroke="#dcdcdc" stroke-width="1"/>
<path d="M948.5 85.9h50.5" stroke="#dcdcdc" stroke-width="1.1" stroke-dasharray="4.6 2.2"/>
<path d="M931 61.2h12.4" stroke="#e0e0e0" stroke-width="1"/><path d="M931 65h12.4" stroke="#e0e0e0" stroke-width="1.8"/><path d="M931 70.3h12.4" stroke="#e0e0e0" stroke-width="3.2"/>
<path d="M931 82h12.4" stroke="#d0d0d0" stroke-width="1" stroke-dasharray="3 1"/><path d="M931 84.7h12.4" stroke="#d0d0d0" stroke-width="1" stroke-dasharray="1 1"/><path d="M931 87.4h12.4" stroke="#d0d0d0" stroke-width="1" stroke-dasharray="4 1 1 1"/><path d="M931 90.1h12.4" stroke="#d0d0d0" stroke-width="1" stroke-dasharray="2 1"/>
<path d="M1001.3 105.0h5.4l-2.7 3.2z" fill="#f0f0f0"/>
<path d="M1083.2 104.8l3.4 3.4 M1087 105.4v3.2h-3.2" stroke="#e0e0e0" stroke-width="1.2" fill="none"/>
<path d="M1099 45h-3.3v21.3h3.3 M1108.5 66.3h3.3v-7" fill="none" stroke="#e0e0e0" stroke-width="1.3"/>
<path d="M1099.5 49.5h3v-2h5.5v6.5h-8.5z" fill="none" stroke="#5fb0ee" stroke-width="1.2"/><circle cx="1104.3" cy="60.3" r="3.4" fill="#8a8a8a" stroke="#bdbdbd" stroke-width="1"/>
<path d="M1114.3 40.9L1115.3 44.9L1118.8 42.8L1116.7 46.3L1120.7 47.3L1116.7 48.3L1118.8 51.8L1115.3 49.7L1114.3 53.7L1113.3 49.7L1109.8 51.8L1111.9 48.3L1107.9 47.3L1111.9 46.3L1109.8 42.8L1113.3 44.9z" fill="#f5c860"/>
<rect x="1131" y="42.5" width="4" height="4" fill="none" stroke="#5fb0ee" stroke-width="1"/><circle cx="1133" cy="51.5" r="2" fill="none" stroke="#c8c8c8" stroke-width="1"/><path d="M1137.5 42v12.5h-2" fill="none" stroke="#d8d8d8" stroke-width="1"/><path d="M1137 46.3l4.4 4.4m0 -4.4l-4.4 4.4" stroke="#e24a4a" stroke-width="1.3"/>
<path d="M1131 61.5h-2v12.5h2" fill="none" stroke="#d8d8d8" stroke-width="1"/><rect x="1131.5" y="62.5" width="3.6" height="3.6" fill="none" stroke="#5fb0ee" stroke-width="1"/><circle cx="1133.3" cy="70.5" r="1.9" fill="none" stroke="#c8c8c8" stroke-width="1"/><path d="M1134.5 73.8l1 -2.6l4 -4l1.6 1.6l-4 4z" fill="#f5c860"/><path d="M1139.5 67.2l1 -1l1.6 1.6l-1 1z" fill="#e05a5a"/>
<rect x="1125.3" y="78.8" width="19.4" height="16.6" fill="#48648f" stroke="#7296c9" stroke-width="1"/>
<path d="M1131 81h-2.4v12h2.4" fill="none" stroke="#e8e8e8" stroke-width="1.1"/><rect x="1131.5" y="81.5" width="9" height="9.5" fill="#5a86c0" stroke="#7fb0e8" stroke-width="0.6" stroke-dasharray="1 1"/><path d="M1136 84v9.6l2.3 -2.1l1.7 3.5l1.4 -0.7l-1.7 -3.4l3.1 -0.3z" fill="#f4f4f4"/>
<path d="M1134.0 105.0h5.4l-2.7 3.2z" fill="#f0f0f0"/>
<path d="M1164.5 48.6v7 M1187 48.6v7 M1166 52h19.5" stroke="#e0e0e0" stroke-width="1" fill="none"/><path d="M1165 52l3 -1.6v3.2z M1186.5 52l-3 -1.6v3.2z" fill="#e0e0e0"/>
<rect x="1164" y="56" width="23.4" height="5.2" fill="#f5c860"/><path d="M1166.5 56v2 M1169 56v2.8 M1171.5 56v2 M1174 56v2.8 M1176.5 56v2 M1179 56v2.8 M1181.5 56v2 M1184 56v2.8" stroke="#8a6a20" stroke-width="0.6"/>
<path d="M1172.7 83.9h4.6l-2.3 2.7z" fill="#f0f0f0"/>
<path d="M1206 45v9.6l2.3 -2.1l1.7 3.5l1.4 -0.7l-1.7 -3.4l3.1 -0.3z" fill="#f4f4f4"/><path d="M1213.5 42l-2.2 3.6h1.8l-1.2 3l3.6 -4.2h-1.8l1.2 -2.4z" fill="#f5c860"/><rect x="1212" y="48.5" width="7" height="6" fill="#e8e8e8"/><rect x="1213.2" y="49.7" width="4.6" height="3.6" fill="#5fb0ee"/>
<rect x="1207" y="61.5" width="10" height="11" fill="none" stroke="#5fb0ee" stroke-width="1" stroke-dasharray="1.6 1"/><path d="M1209 64h3v6h4" fill="none" stroke="#5fb0ee" stroke-width="1.2"/><path d="M1213.5 66v9l2.2 -2l1.6 3.3l1.3 -0.7l-1.6 -3.2l2.9 -0.3z" fill="#f4f4f4"/>
<rect x="1208" y="81.5" width="9.4" height="12" fill="none" stroke="#e0e0e0" stroke-width="1.1"/><rect x="1209.8" y="83.3" width="5.8" height="2.2" fill="#e0e0e0"/><path d="M1210 87.5h1.4m1 0h1.4m1 0h1 M1210 89.6h1.4m1 0h1.4m1 0h1 M1210 91.7h1.4m1 0h1.4m1 0h1" stroke="#e0e0e0" stroke-width="1.1"/>
<path d="M1200.3 105.0h5.4l-2.7 3.2z" fill="#f0f0f0"/>
<path d="M1236 45h16.5v19h-16.5z" fill="#d6a868"/><path d="M1241 45v-2h2.5a1.6 1.6 0 0 1 3.2 0h2.5v2z" fill="#e8e8e8"/><path d="M1242.5 49.5h10.2l4 4v13.5h-14.2z" fill="#e4e4e4"/><path d="M1252.7 49.5v4h4z" fill="#b8b8b8"/>
<path d="M1244.2 83.9h4.6l-2.3 2.7z" fill="#f0f0f0"/>
<rect x="1270.5" y="42.8" width="8" height="9.6" fill="none" stroke="#e0e0e0" stroke-width="1"/><path d="M1272 45.5h4 M1272 47.8h4 M1272 50.1h3" stroke="#e0e0e0" stroke-width="0.9"/><path d="M1277 46l4.5 6 M1281.5 46l-4.5 6" stroke="#e8e8e8" stroke-width="1"/><circle cx="1277" cy="53" r="1.2" fill="none" stroke="#e8e8e8" stroke-width="0.9"/><circle cx="1281.5" cy="53" r="1.2" fill="none" stroke="#e8e8e8" stroke-width="0.9"/>
<path d="M1271.5 62h5l1.8 1.8v8h-6.8z" fill="#d8d8d8"/><path d="M1274.5 65.3h5l1.8 1.8v7.5h-6.8z" fill="#e8e8e8" stroke="#565656" stroke-width="0.6"/>
<path d="M1300.3 45h10.9v7.5h14.9v11.5h-25.8z" fill="#e2e2e2"/>
<path d="M1311.2 83.9h4.6l-2.3 2.7z" fill="#f0f0f0"/><path d="M1317.3 105.0h5.4l-2.7 3.2z" fill="#f0f0f0"/>
<path d="M1330 104.8l3.4 3.4 M1333.8 105.4v3.2h-3.2" stroke="#e0e0e0" stroke-width="1.2" fill="none"/>
</svg>

<!-- drawing area -->
<div class="a" style="left:0;top:138.2px;width:1536px;height:663.8px;background:#212832"></div>
<svg style="left:0;top:0" width="1536" height="825" viewBox="0 0 1536 825">
<g fill="none" stroke-width="1"><path d="M20.9 138.2V802" stroke="#252c36"/><path d="M46.1 138.2V802" stroke="#252c36"/><path d="M71.3 138.2V802" stroke="#2a313c"/><path d="M96.5 138.2V802" stroke="#252c36"/><path d="M121.7 138.2V802" stroke="#252c36"/><path d="M146.9 138.2V802" stroke="#252c36"/><path d="M172.1 138.2V802" stroke="#252c36"/><path d="M197.3 138.2V802" stroke="#2a313c"/><path d="M222.5 138.2V802" stroke="#252c36"/><path d="M247.7 138.2V802" stroke="#252c36"/><path d="M272.9 138.2V802" stroke="#252c36"/><path d="M298.1 138.2V802" stroke="#252c36"/><path d="M323.3 138.2V802" stroke="#2a313c"/><path d="M348.5 138.2V802" stroke="#252c36"/><path d="M373.7 138.2V802" stroke="#252c36"/><path d="M398.9 138.2V802" stroke="#252c36"/><path d="M424.1 138.2V802" stroke="#252c36"/><path d="M449.3 138.2V802" stroke="#2a313c"/><path d="M474.5 138.2V802" stroke="#252c36"/><path d="M499.7 138.2V802" stroke="#252c36"/><path d="M524.9 138.2V802" stroke="#252c36"/><path d="M550.1 138.2V802" stroke="#252c36"/><path d="M575.3 138.2V802" stroke="#2a313c"/><path d="M600.5 138.2V802" stroke="#252c36"/><path d="M625.7 138.2V802" stroke="#252c36"/><path d="M650.9 138.2V802" stroke="#252c36"/><path d="M676.1 138.2V802" stroke="#252c36"/><path d="M701.3 138.2V802" stroke="#2a313c"/><path d="M726.5 138.2V802" stroke="#252c36"/><path d="M751.7 138.2V802" stroke="#252c36"/><path d="M776.9 138.2V802" stroke="#252c36"/><path d="M802.1 138.2V802" stroke="#252c36"/><path d="M827.3 138.2V802" stroke="#2a313c"/><path d="M852.5 138.2V802" stroke="#252c36"/><path d="M877.7 138.2V802" stroke="#252c36"/><path d="M902.9 138.2V802" stroke="#252c36"/><path d="M928.1 138.2V802" stroke="#252c36"/><path d="M953.3 138.2V802" stroke="#2a313c"/><path d="M978.5 138.2V802" stroke="#252c36"/><path d="M1003.7 138.2V802" stroke="#252c36"/><path d="M1028.9 138.2V802" stroke="#252c36"/><path d="M1054.1 138.2V802" stroke="#252c36"/><path d="M1079.3 138.2V802" stroke="#2a313c"/><path d="M1104.5 138.2V802" stroke="#252c36"/><path d="M1129.7 138.2V802" stroke="#252c36"/><path d="M1154.9 138.2V802" stroke="#252c36"/><path d="M1180.1 138.2V802" stroke="#252c36"/><path d="M1205.3 138.2V802" stroke="#2a313c"/><path d="M1230.5 138.2V802" stroke="#252c36"/><path d="M1255.7 138.2V802" stroke="#252c36"/><path d="M1280.9 138.2V802" stroke="#252c36"/><path d="M1306.1 138.2V802" stroke="#252c36"/><path d="M1331.3 138.2V802" stroke="#2a313c"/><path d="M1356.5 138.2V802" stroke="#252c36"/><path d="M1381.7 138.2V802" stroke="#252c36"/><path d="M1406.9 138.2V802" stroke="#252c36"/><path d="M1432.1 138.2V802" stroke="#252c36"/><path d="M1457.3 138.2V802" stroke="#2a313c"/><path d="M1482.5 138.2V802" stroke="#252c36"/><path d="M1507.7 138.2V802" stroke="#252c36"/><path d="M0 149.0H1531" stroke="#252c36"/><path d="M0 174.2H1531" stroke="#252c36"/><path d="M0 199.4H1531" stroke="#2a313c"/><path d="M0 224.6H1531" stroke="#252c36"/><path d="M0 249.8H1531" stroke="#252c36"/><path d="M0 275.0H1531" stroke="#252c36"/><path d="M0 300.2H1531" stroke="#252c36"/><path d="M0 325.4H1531" stroke="#2a313c"/><path d="M0 350.6H1531" stroke="#252c36"/><path d="M0 375.8H1531" stroke="#252c36"/><path d="M0 401.0H1531" stroke="#252c36"/><path d="M0 426.2H1531" stroke="#252c36"/><path d="M0 451.4H1531" stroke="#2a313c"/><path d="M0 476.6H1531" stroke="#252c36"/><path d="M0 501.8H1531" stroke="#252c36"/><path d="M0 527.0H1531" stroke="#252c36"/><path d="M0 552.2H1531" stroke="#252c36"/><path d="M0 577.4H1531" stroke="#2a313c"/><path d="M0 602.6H1531" stroke="#252c36"/><path d="M0 627.8H1531" stroke="#252c36"/><path d="M0 653.0H1531" stroke="#252c36"/><path d="M0 678.2H1531" stroke="#252c36"/><path d="M0 703.4H1531" stroke="#2a313c"/><path d="M0 728.6H1531" stroke="#252c36"/><path d="M0 753.8H1531" stroke="#252c36"/><path d="M0 779.0H1531" stroke="#252c36"/></g>
<g fill="none" stroke="#c66b66" stroke-width="1.15"><rect x="343.2" y="220.4" width="358.1" height="121"/><path d="M343.2 457.6H701.3V619.6H343.2Z"/><path d="M343.2 477.6H701.3 M343.2 524.6H701.3 M343.2 572.0H701.3"/><path d="M522.2 477.6V619.6"/><rect x="348.5" y="482.8" width="169" height="37.1"/><rect x="527.3" y="482.8" width="169" height="37.1"/><rect x="418.5" y="487.3" width="28.3" height="5.5"/><rect x="597.3" y="487.3" width="28.3" height="5.5"/><rect x="348.5" y="530.2" width="169" height="37.1"/><rect x="527.3" y="530.2" width="169" height="37.1"/><rect x="418.5" y="534.7" width="28.3" height="5.5"/><rect x="597.3" y="534.7" width="28.3" height="5.5"/><rect x="348.5" y="577.6" width="169" height="37.1"/><rect x="527.3" y="577.6" width="169" height="37.1"/><rect x="418.5" y="582.1" width="28.3" height="5.5"/><rect x="597.3" y="582.1" width="28.3" height="5.5"/><path d="M343.2 619.6V639.6H373.5V619.6 M670.3 619.6V639.6H701.3V619.6"/></g>
<g fill="none" stroke="#d0d0d0" stroke-width="1.4"><path d="M315.8 217V345 M308.2 220.4H328.7 M308.2 341.4H328.7"/><path d="M312.7 216.6L318.9 224.2" stroke-width="2.4"/><path d="M312.7 337.6L318.9 345.2" stroke-width="2.4"/><path d="M340 377.7H705 M343.2 365.2V385.3 M701.3 365.2V385.3"/><path d="M339.9 381.0L346.5 374.4" stroke-width="2.4"/><path d="M698.0 381.0L704.6 374.4" stroke-width="2.4"/><path d="M255.8 454V643 M248.5 457.6H268.5 M248.5 639.6H268.5"/><path d="M252.7 453.8L258.9 461.4" stroke-width="2.4"/><path d="M252.7 635.8L258.9 643.4" stroke-width="2.4"/><path d="M296.6 442.8V654.2"/><path d="M289.0 457.6H309.4"/><path d="M293.5 453.8L299.7 461.4" stroke-width="2.4"/><path d="M289.0 477.6H309.4"/><path d="M293.5 473.8L299.7 481.4" stroke-width="2.4"/><path d="M289.0 524.6H309.4"/><path d="M293.5 520.8L299.7 528.4" stroke-width="2.4"/><path d="M289.0 572.0H309.4"/><path d="M293.5 568.2L299.7 575.8" stroke-width="2.4"/><path d="M289.0 619.6H309.4"/><path d="M293.5 615.8L299.7 623.4" stroke-width="2.4"/><path d="M289.0 639.6H309.4"/><path d="M293.5 635.8L299.7 643.4" stroke-width="2.4"/><path d="M340 677.2H705 M340 700.1H705"/><path d="M343.2 664V684"/><path d="M339.9 680.5L346.5 673.9" stroke-width="2.4"/><path d="M522.2 664V684"/><path d="M518.9 680.5L525.5 673.9" stroke-width="2.4"/><path d="M701.3 664V684"/><path d="M698.0 680.5L704.6 673.9" stroke-width="2.4"/><path d="M343.2 687V707"/><path d="M339.9 703.4L346.5 696.8" stroke-width="2.4"/><path d="M701.3 687V707"/><path d="M698.0 703.4L704.6 696.8" stroke-width="2.4"/></g>
<g fill="#9aa0a8"><rect x="342.7" y="349" width="1" height="1"/><rect x="700.8" y="349" width="1" height="1"/><rect x="342.7" y="648.6" width="1" height="1"/><rect x="521.7" y="648.6" width="1" height="1"/><rect x="700.8" y="648.6" width="1" height="1"/><rect x="324.2" y="457.1" width="1" height="1"/><rect x="324.2" y="477.1" width="1" height="1"/><rect x="324.2" y="524.1" width="1" height="1"/><rect x="324.2" y="571.5" width="1" height="1"/><rect x="324.2" y="619.1" width="1" height="1"/><rect x="324.2" y="639.1" width="1" height="1"/></g>
<g fill="none" stroke="#d8d8d8" stroke-width="1.1"><path d="M16.4 745.6V782 M20.8 786.2H57"/><rect x="12.7" y="782" width="8.1" height="8.1"/><path d="M16.4 782V786.2H20.8" stroke-width="1"/><path d="M17.3 732L22.7 738L28 732 M22.7 738V743"/><path d="M60 774L71 785 M71 774L60 785"/></g>
</svg>

<!-- right strip -->
<div class="a" style="left:1530.5px;top:138.2px;width:5.5px;height:664px;background:linear-gradient(90deg,#aac4e8,#dfe9f7 35%,#eef3fa)"></div>
<!-- command history -->
<div class="a" style="left:370.6px;top:735.3px;width:631px;height:11.2px;background:#4b4e53;border-radius:2px"></div>
<div class="a" style="left:370.6px;top:751px;width:48px;height:11.6px;background:#4f5257;border-radius:2px"></div>
<div class="a" style="left:370.6px;top:767.2px;width:48px;height:11.6px;background:#4f5257;border-radius:2px"></div>
<!-- command line -->
<div class="a" style="left:323px;top:781.3px;width:891px;height:20.5px;background:#3c3c3c;border-radius:2px 0 0 2px"></div>
<div class="a" style="left:366px;top:781.3px;width:848px;height:20.5px;background:#bebfc0"></div>
<svg style="left:0;top:0" width="1536" height="825" viewBox="0 0 1536 825">
<g fill="#8a8a8a"><rect x="326" y="784" width="1" height="15" fill="none" stroke="#8a8a8a" stroke-width="1" stroke-dasharray="1 1"/><rect x="328.5" y="784" width="1" height="15" fill="none" stroke="#8a8a8a" stroke-width="1" stroke-dasharray="1 1"/></g>
<path d="M335.5 788.5l6 6m0 -6l-6 6" stroke="#e8e8e8" stroke-width="1.6" fill="none"/>
<path d="M351.3 786.2a3.2 3.2 0 0 0 3.6 4.3l5 5a1.2 1.2 0 0 0 1.8 -1.8l-5 -5a3.2 3.2 0 0 0 -4.3 -3.6l2.2 2.2l-1.1 1.1z" fill="#e8e8e8"/>
<rect x="370.3" y="786" width="11.5" height="10" rx="1" fill="#b0b0b0" stroke="#6e6e6e" stroke-width="1"/>
<path d="M372.5 788.5l3 2.3l-3 2.3 M376.5 794h3.5" stroke="#4a4a4a" stroke-width="1.1" fill="none"/>
<path d="M384.8 790h4.4l-2.2 2.6z" fill="#555"/>
<path d="M1208.5 793.3h5l-2.5 -3z" fill="#2a2a2a"/>
</svg>
<!-- status bar -->
<div class="a" style="left:0;top:801.8px;width:1536px;height:23.2px;background:#383838"></div>
<div class="a" style="left:1086px;top:802px;width:450px;height:23px;background:#515151"></div>

<svg style="left:0;top:0" width="1536" height="825" viewBox="0 0 1536 825">
<g><rect x="1086.5" y="803.3" width="38.0" height="20.6" fill="none" stroke="#656565" stroke-width="1"/><rect x="1126.3" y="803.3" width="51.2" height="20.6" fill="none" stroke="#656565" stroke-width="1"/><rect x="1179.3" y="803.3" width="132.8" height="20.6" fill="none" stroke="#656565" stroke-width="1"/><rect x="1313.9" y="803.3" width="85.2" height="20.6" fill="none" stroke="#656565" stroke-width="1"/><rect x="1400.9" y="803.3" width="31.8" height="20.6" fill="none" stroke="#656565" stroke-width="1"/><rect x="1434.5" y="803.3" width="18.6" height="20.6" fill="none" stroke="#656565" stroke-width="1"/><rect x="1454.9" y="803.3" width="19.7" height="20.6" fill="none" stroke="#656565" stroke-width="1"/><rect x="1476.4" y="803.3" width="18.2" height="20.6" fill="none" stroke="#656565" stroke-width="1"/><rect x="1496.4" y="803.3" width="39.2" height="20.6" fill="none" stroke="#656565" stroke-width="1"/></g>
<g fill="#5189c6">
<rect x="1127.8" y="804.7" width="17.2" height="17.8"/><rect x="1200" y="804.7" width="17.5" height="17.8"/><rect x="1263" y="804.7" width="17.5" height="17.8"/><rect x="1282" y="804.7" width="18" height="17.8"/><rect x="1315.8" y="804.7" width="17.7" height="17.8"/>
</g>
<!-- grid icon -->
<path d="M1130 810.5h13 M1130 814h13 M1130 817.5h13 M1132.8 807v13.5 M1136.4 807v13.5 M1140 807v13.5" stroke="#ffffff" stroke-width="1.1" fill="none"/>
<!-- snap dots -->
<g fill="#e6e6e6"><rect x="1151" y="808.5" width="1.6" height="1.6"/><rect x="1155.2" y="808.5" width="1.6" height="1.6"/><rect x="1159.4" y="808.5" width="1.6" height="1.6"/>
<rect x="1151" y="812.7" width="1.6" height="1.6"/><rect x="1155.2" y="812.7" width="1.6" height="1.6"/><rect x="1159.4" y="812.7" width="1.6" height="1.6"/>
<rect x="1151" y="816.9" width="1.6" height="1.6"/><rect x="1155.2" y="816.9" width="1.6" height="1.6"/><rect x="1159.4" y="816.9" width="1.6" height="1.6"/></g>
<g fill="#f0f0f0"><path d="M1168.3 812h5.6l-2.8 3.4z M1221.2 812h5.6l-2.8 3.4z M1252.2 812h5.6l-2.8 3.4z M1303.2 812h5.6l-2.8 3.4z M1390.8 812h5.6l-2.8 3.4z M1424.2 812h5.6l-2.8 3.4z"/></g>
<!-- ortho -->
<path d="M1183.5 806.5v13h12 M1183.5 815.5h4v4" stroke="#e6e6e6" stroke-width="1.2" fill="none"/>
<!-- polar -->
<g stroke="#f4f4f4" stroke-width="1.2" fill="none"><circle cx="1208" cy="814" r="5.4"/><path d="M1208 814h8 M1208 814l6.5 -6.5"/></g>
<!-- iso -->
<path d="M1234 806.5l11.5 12.5" stroke="#c84a4a" stroke-width="1.1" fill="none"/><path d="M1239.7 805.5v15" stroke="#8ab4e0" stroke-width="1.1" fill="none"/><circle cx="1239.7" cy="813.3" r="1.5" fill="none" stroke="#e6e6e6" stroke-width="0.9"/>
<!-- otrack -->
<path d="M1266 819.5h12 M1266 819.5l10 -10" stroke="#f4f4f4" stroke-width="1.3" fill="none"/>
<!-- osnap -->
<path d="M1286.5 809.5h11v10.5h-11z" stroke="#f4f4f4" stroke-width="1.2" fill="none"/><rect x="1284.5" y="807.3" width="3.6" height="3.6" fill="#5189c6" stroke="#f4f4f4" stroke-width="1"/>
<!-- annotation icons -->
<g fill="#f4f4f4"><path d="M1324 808l1.6 6.5l5 6l-5.4 -3l-1.2 3l-1.2 -3l-5.4 3l5 -6z"/></g>
<circle cx="1329.5" cy="809" r="1.9" fill="none" stroke="#f4f4f4" stroke-width="1"/>
<g fill="#e6e6e6"><path d="M1343.5 808l1.6 6.5l5 6l-5.4 -3l-1.2 3l-1.2 -3l-5.4 3l5 -6z"/><path d="M1349 805.5l-2.5 4h2l-1.5 3.5l4 -4.5h-2l1.5 -3z"/>
<path d="M1363 808l1.6 6.5l5 6l-5.4 -3l-1.2 3l-1.2 -3l-5.4 3l5 -6z"/></g>
<!-- gear -->
<g transform="translate(1410.7 813.7)"><g fill="#e6e6e6"><rect x="-1.3" y="-6.6" width="2.6" height="13.2"/><rect x="-1.3" y="-6.6" width="2.6" height="13.2" transform="rotate(45)"/><rect x="-1.3" y="-6.6" width="2.6" height="13.2" transform="rotate(90)"/><rect x="-1.3" y="-6.6" width="2.6" height="13.2" transform="rotate(135)"/><circle r="4.6"/></g><circle r="2.1" fill="#525252"/></g>
<!-- plus -->
<path d="M1437 814h13 M1443.5 807.5v13" stroke="#f0f0f0" stroke-width="1.4" fill="none"/>
<!-- shapes -->
<g stroke="#e0e0e0" stroke-width="1" fill="none"><rect x="1459" y="808" width="4.5" height="4.5"/><circle cx="1469" cy="812.5" r="2.3"/><path d="M1460.5 820l3 -4.5l3 4.5z"/></g>
<!-- hw accel icon -->
<path d="M1480.5 808h6l3 3v8h-9z" fill="#6aa0d8"/><path d="M1482 809h3v6h-3z" fill="#cfe2f5"/><rect x="1481" y="815.5" width="6" height="3.5" fill="#e0a23a"/><path d="M1487.5 819l1.3 1.3l2.7 -3" stroke="#3faf3f" stroke-width="1.2" fill="none"/>
<!-- fullscreen -->
<rect x="1500.5" y="809" width="12.5" height="9.5" fill="none" stroke="#e6e6e6" stroke-width="1.2"/><path d="M1507.5 811h3.5v3.5 M1511 811l-3 3 M1506 816.5h-3.5v-3.5 M1502.5 816.5l3 -3" stroke="#e6e6e6" stroke-width="1" fill="none"/>
<!-- hamburger -->
<path d="M1519 809h13 M1519 813.7h13 M1519 818.4h13" stroke="#f0f0f0" stroke-width="1.7" fill="none"/>
</svg>

<svg style="left:0;top:0" width="1536" height="825" viewBox="0 0 1536 825">
<defs>
<linearGradient id="mg" x1="0" y1="0" x2="0" y2="1"><stop offset="0" stop-color="#4e4e4e"/><stop offset="0.6" stop-color="#6e6e6e"/><stop offset="1" stop-color="#9a9a9a"/></linearGradient>
</defs>
<!-- layout tabs -->
<path d="M6 802.3 C10 802.3 9.5 816.5 14.5 816.5 L50 816.5 C55 816.5 54 802.3 59 802.3 Z" fill="url(#mg)"/>
<path d="M57 802.6 C61 802.6 60 815.8 65 815.8 L100 815.8 C105 815.8 104.5 802.6 109 802.6 Z" fill="#545454"/>
<path d="M111 815.3 C116 815.3 114 803.5 119 803.5 L129 803.5 C128 809 126 815.3 121 815.3 Z" fill="#555555"/>
<path d="M116.5 809.6h7m-3.5 -3.5v7" stroke="#e4e4e4" stroke-width="1.5" fill="none"/>
<!-- viewport controls -->
<path d="M1481 152.1h8.5" stroke="#f0f0f0" stroke-width="2"/>
<path d="M1497.6 148.7h5.4v5.4h-5.4z M1499.8 148.7v-2.3h5.4v5.4h-2.2" stroke="#f0f0f0" stroke-width="1.5" fill="none"/>
<path d="M1514.2 147.6l6.2 6m0 -6l-6.2 6" stroke="#f0f0f0" stroke-width="1.8" fill="none"/>
<!-- viewcube -->
<circle cx="1464" cy="223" r="42.2" fill="none" stroke="#4d5056" stroke-width="10.6"/>
<rect x="1443" y="202.7" width="41.8" height="41.1" fill="#a6a6a6"/>
<rect x="1451" y="210" width="26" height="26" fill="#969696"/>
<rect x="1445" y="293.5" width="37.8" height="13" rx="3" fill="#8c8c8c" stroke="#6a6a6a" stroke-width="0.8"/>
<rect x="1471" y="296" width="9" height="8" rx="1.5" fill="#999999"/>
<!-- nav bar -->
<rect x="1501.5" y="327" width="25.5" height="169.7" rx="3" fill="#5e6165" stroke="#3a3d42" stroke-width="0.8" stroke-dasharray="1 1"/>
<g fill="none" stroke="#45484d" stroke-width="1.1">
<circle cx="1521.5" cy="331.5" r="2"/><circle cx="1521.5" cy="492" r="2"/>
<circle cx="1514" cy="350.7" r="8"/><circle cx="1514" cy="350.7" r="4.6"/><path d="M1514 342.7h8v8"/>
<path d="M1508 385c-3-3-2-5 0-4l2 2v-8c0-2 2-2 2 0v-2c0-2 2-2 2 0v1c0-2 2-2 2 0v2c0-2 2-1.5 2 0v8c0 4-2 6-5 6c-3 0-4-2-5-5z"/>
<path d="M1506 399l10 10 M1516 399l-10 10 M1506 399h3m-3 0v3 M1516 399h-3m3 0v3 M1506 409h3m-3 0v-3"/><circle cx="1518" cy="411" r="3.4"/><path d="M1520.5 413.5l3 3" stroke-width="1.8"/>
<ellipse cx="1514" cy="440" rx="8.5" ry="3.4"/><path d="M1512.3 433v14h3.4v-14z M1510.5 433.5l3.5-4l3.5 4"/>
<rect x="1506" y="463" width="4.2" height="4.2"/><rect x="1511.9" y="463" width="4.2" height="4.2"/><rect x="1517.8" y="463" width="4.2" height="4.2"/><rect x="1506" y="469.5" width="12" height="9.5"/>
</g>
<g fill="#45484d"><path d="M1512 366h4l-2 2.4z M1512 422h4l-2 2.4z M1512 452.5h4l-2 2.4z M1509.5 471.5v5.5l5-2.75z"/></g>
<!-- balloon -->
<path d="M1234.5 722.3 H1524 Q1534.3 722.3 1534.3 732.3 V787.4 Q1534.3 797.4 1524 797.4 H1463 L1474 813.4 L1447.5 797.4 H1234.5 Q1224.5 797.4 1224.5 787.4 V732.3 Q1224.5 722.3 1234.5 722.3 Z" fill="#ffffe1" stroke="#0c0c10" stroke-width="1"/>
<rect x="1517.6" y="730.4" width="12.8" height="11.8" fill="#fbfbf0" stroke="#8c8c8c" stroke-width="1"/>
<path d="M1521 733.3l6 6m0 -6l-6 6" stroke="#101010" stroke-width="1.7" fill="none"/>
</svg>

<span class="t" style="left:558.0px;top:3.3px;font-size:9.60px;line-height:12.48px;color:#1e0805;letter-spacing:-0.116px;">Autodesk AutoCAD 2019</span>
<span class="t" style="left:671.7px;top:3.3px;font-size:9.60px;line-height:12.48px;color:#1e0805;letter-spacing:0.080px;">Int-Meja4.dwg</span>
<span class="t" style="left:1062.5px;top:3.5px;font-size:9.30px;line-height:12.09px;color:#b4b4b4;letter-spacing:-0.429px;font-style:italic;">Type a keyword or phrase</span>
<span class="t" style="left:1243.0px;top:4.2px;font-size:9.80px;line-height:12.74px;color:#f0f0f0;letter-spacing:-0.259px;">Sign In</span>
<span class="t" style="left:44.3px;top:21.6px;font-size:9.60px;line-height:12.48px;color:#ffffff;letter-spacing:0.027px;">Home</span>
<span class="t" style="left:86.7px;top:21.6px;font-size:9.60px;line-height:12.48px;color:#e6e6e6;letter-spacing:-0.233px;">Insert</span>
<span class="t" style="left:126.0px;top:21.6px;font-size:9.60px;line-height:12.48px;color:#e6e6e6;letter-spacing:0.072px;">Annotate</span>
<span class="t" style="left:181.0px;top:21.6px;font-size:9.60px;line-height:12.48px;color:#e6e6e6;letter-spacing:-0.069px;">Parametric</span>
<span class="t" style="left:242.7px;top:21.6px;font-size:9.60px;line-height:12.48px;color:#e6e6e6;letter-spacing:-0.256px;">View</span>
<span class="t" style="left:278.7px;top:21.6px;font-size:9.60px;line-height:12.48px;color:#e6e6e6;letter-spacing:-0.112px;">Manage</span>
<span class="t" style="left:329.3px;top:21.6px;font-size:9.60px;line-height:12.48px;color:#e6e6e6;letter-spacing:0.198px;">Output</span>
<span class="t" style="left:375.7px;top:21.6px;font-size:9.60px;line-height:12.48px;color:#e6e6e6;letter-spacing:0.110px;">Add-ins</span>
<span class="t" style="left:425.3px;top:21.6px;font-size:9.60px;line-height:12.48px;color:#e6e6e6;letter-spacing:-0.034px;">Collaborate</span>
<span class="t" style="left:490.0px;top:21.6px;font-size:9.60px;line-height:12.48px;color:#e6e6e6;letter-spacing:-0.373px;">Express Tools</span>
<span class="t" style="left:561.3px;top:21.6px;font-size:9.60px;line-height:12.48px;color:#e6e6e6;letter-spacing:-0.131px;">Featured Apps</span>
<span class="t" style="left:9.5px;top:69.8px;font-size:9.60px;line-height:12.48px;color:#e6e6e6;letter-spacing:-0.160px;">Line</span>
<span class="t" style="left:36.5px;top:69.8px;font-size:9.60px;line-height:12.48px;color:#e6e6e6;letter-spacing:-0.051px;">Polyline</span>
<span class="t" style="left:81.0px;top:69.8px;font-size:9.60px;line-height:12.48px;color:#e6e6e6;letter-spacing:-0.089px;">Circle</span>
<span class="t" style="left:122.5px;top:69.8px;font-size:9.60px;line-height:12.48px;color:#e6e6e6;letter-spacing:0.036px;">Arc</span>
<span class="t" style="left:74.5px;top:100.5px;font-size:9.60px;line-height:12.48px;color:#e6e6e6;letter-spacing:-0.223px;">Draw</span>
<span class="t" style="left:203.5px;top:42.8px;font-size:9.60px;line-height:12.48px;color:#e6e6e6;letter-spacing:0.133px;">Move</span>
<span class="t" style="left:203.5px;top:62.2px;font-size:9.60px;line-height:12.48px;color:#e6e6e6;letter-spacing:0.023px;">Copy</span>
<span class="t" style="left:203.5px;top:81.3px;font-size:9.60px;line-height:12.48px;color:#e6e6e6;letter-spacing:-0.172px;">Stretch</span>
<span class="t" style="left:261.3px;top:42.8px;font-size:9.60px;line-height:12.48px;color:#e6e6e6;letter-spacing:-0.214px;">Rotate</span>
<span class="t" style="left:261.3px;top:62.2px;font-size:9.60px;line-height:12.48px;color:#e6e6e6;letter-spacing:0.159px;">Mirror</span>
<span class="t" style="left:261.3px;top:81.3px;font-size:9.60px;line-height:12.48px;color:#e6e6e6;letter-spacing:-0.520px;">Scale</span>
<span class="t" style="left:316.7px;top:42.8px;font-size:9.60px;line-height:12.48px;color:#e6e6e6;letter-spacing:-0.307px;">Trim</span>
<span class="t" style="left:316.7px;top:62.2px;font-size:9.60px;line-height:12.48px;color:#e6e6e6;letter-spacing:-0.111px;">Fillet</span>
<span class="t" style="left:316.7px;top:81.3px;font-size:9.60px;line-height:12.48px;color:#e6e6e6;letter-spacing:-0.184px;">Array</span>
<span class="t" style="left:260.3px;top:100.5px;font-size:9.60px;line-height:12.48px;color:#e6e6e6;letter-spacing:0.406px;">Modify</span>
<span class="t" style="left:392.0px;top:69.8px;font-size:9.60px;line-height:12.48px;color:#e6e6e6;letter-spacing:-0.327px;">Text</span>
<span class="t" style="left:419.7px;top:69.8px;font-size:9.60px;line-height:12.48px;color:#e6e6e6;letter-spacing:-0.025px;">Dimension</span>
<span class="t" style="left:489.0px;top:42.8px;font-size:9.60px;line-height:12.48px;color:#e6e6e6;letter-spacing:-0.279px;">Linear</span>
<span class="t" style="left:489.0px;top:62.2px;font-size:9.60px;line-height:12.48px;color:#e6e6e6;letter-spacing:-0.479px;">Leader</span>
<span class="t" style="left:489.0px;top:81.3px;font-size:9.60px;line-height:12.48px;color:#e6e6e6;letter-spacing:-0.388px;">Table</span>
<span class="t" style="left:427.0px;top:100.5px;font-size:9.60px;line-height:12.48px;color:#e6e6e6;letter-spacing:0.163px;">Annotation</span>
<span class="t" style="left:547.0px;top:69.8px;font-size:9.60px;line-height:12.48px;color:#e6e6e6;letter-spacing:-0.340px;">Layer</span>
<span class="t" style="left:537.0px;top:81.8px;font-size:9.60px;line-height:12.48px;color:#e6e6e6;letter-spacing:-0.223px;">Properties</span>
<span class="t" style="left:647.7px;top:43.4px;font-size:9.00px;line-height:11.70px;color:#e6e6e6;letter-spacing:-0.217px;">CABINET</span>
<span class="t" style="left:678.5px;top:62.2px;font-size:9.60px;line-height:12.48px;color:#e6e6e6;letter-spacing:-0.027px;">Make Current</span>
<span class="t" style="left:678.5px;top:81.3px;font-size:9.60px;line-height:12.48px;color:#e6e6e6;letter-spacing:-0.027px;">Match Layer</span>
<span class="t" style="left:622.7px;top:100.5px;font-size:9.60px;line-height:12.48px;color:#e6e6e6;letter-spacing:-0.416px;">Layers</span>
<span class="t" style="left:757.0px;top:69.1px;font-size:9.60px;line-height:12.48px;color:#e6e6e6;letter-spacing:-0.217px;">Insert</span>
<span class="t" style="left:803.5px;top:42.8px;font-size:9.60px;line-height:12.48px;color:#e6e6e6;letter-spacing:-0.216px;">Create</span>
<span class="t" style="left:803.5px;top:62.2px;font-size:9.60px;line-height:12.48px;color:#e6e6e6;letter-spacing:-0.087px;">Edit</span>
<span class="t" style="left:803.5px;top:81.3px;font-size:9.60px;line-height:12.48px;color:#e6e6e6;letter-spacing:0.053px;">Edit Attributes</span>
<span class="t" style="left:798.5px;top:100.5px;font-size:9.60px;line-height:12.48px;color:#e6e6e6;letter-spacing:-0.134px;">Block</span>
<span class="t" style="left:892.0px;top:69.8px;font-size:9.60px;line-height:12.48px;color:#e6e6e6;letter-spacing:0.172px;">Match</span>
<span class="t" style="left:883.5px;top:81.8px;font-size:9.60px;line-height:12.48px;color:#e6e6e6;letter-spacing:-0.123px;">Properties</span>
<span class="t" style="left:976.5px;top:43.1px;font-size:9.60px;line-height:12.48px;color:#e6e6e6;letter-spacing:-0.386px;">ByLayer</span>
<span class="t" style="left:1001.5px;top:61.9px;font-size:9.60px;line-height:12.48px;color:#e6e6e6;letter-spacing:-0.386px;">ByLayer</span>
<span class="t" style="left:1001.5px;top:81.0px;font-size:8.80px;line-height:11.44px;color:#e6e6e6;letter-spacing:-0.348px;">BYLAYER</span>
<span class="t" style="left:954.3px;top:100.5px;font-size:9.60px;line-height:12.48px;color:#e6e6e6;letter-spacing:-0.203px;">Properties</span>
<span class="t" style="left:1096.3px;top:69.8px;font-size:9.60px;line-height:12.48px;color:#e6e6e6;letter-spacing:-0.254px;">Group</span>
<span class="t" style="left:1098.7px;top:100.5px;font-size:9.60px;line-height:12.48px;color:#e6e6e6;letter-spacing:-0.245px;">Groups</span>
<span class="t" style="left:1157.5px;top:69.8px;font-size:9.60px;line-height:12.48px;color:#e6e6e6;letter-spacing:-0.161px;">Measure</span>
<span class="t" style="left:1164.0px;top:100.5px;font-size:9.60px;line-height:12.48px;color:#e6e6e6;letter-spacing:0.009px;">Utilities</span>
<span class="t" style="left:1235.3px;top:69.8px;font-size:9.60px;line-height:12.48px;color:#e6e6e6;letter-spacing:-0.469px;">Paste</span>
<span class="t" style="left:1236.3px;top:100.5px;font-size:9.60px;line-height:12.48px;color:#e6e6e6;letter-spacing:0.014px;">Clipboard</span>
<span class="t" style="left:1304.0px;top:69.8px;font-size:9.60px;line-height:12.48px;color:#e6e6e6;letter-spacing:-0.644px;">Base</span>
<span class="t" style="left:1292.5px;top:100.5px;font-size:9.60px;line-height:12.48px;color:#e6e6e6;letter-spacing:-0.531px;">View</span>
<span class="t" style="left:25.7px;top:120.6px;font-size:9.60px;line-height:12.48px;color:#c8c8c8;letter-spacing:-0.193px;">Start</span>
<span class="t" style="left:124.1px;top:120.6px;font-size:9.60px;line-height:12.48px;color:#c8c8c8;letter-spacing:0.003px;">Int-Lemari9*</span>
<span class="t" style="left:222.5px;top:120.6px;font-size:9.60px;line-height:12.48px;color:#c8c8c8;letter-spacing:0.008px;">Int-Lemari10*</span>
<span class="t" style="left:321.0px;top:120.6px;font-size:9.60px;line-height:12.48px;color:#c8c8c8;letter-spacing:0.062px;">Int-Lemari11*</span>
<span class="t" style="left:419.4px;top:120.6px;font-size:9.60px;line-height:12.48px;color:#c8c8c8;letter-spacing:0.083px;">Int-Meja 2*</span>
<span class="t" style="left:517.8px;top:120.6px;font-size:9.60px;line-height:12.48px;color:#c8c8c8;letter-spacing:-0.030px;">Int-Meja Kerja</span>
<span class="t" style="left:616.2px;top:120.6px;font-size:9.60px;line-height:12.48px;color:#c8c8c8;letter-spacing:-0.141px;">Int-Meja Rias 2*</span>
<span class="t" style="left:714.6px;top:120.6px;font-size:9.60px;line-height:12.48px;color:#c8c8c8;letter-spacing:-0.089px;">Int-Meja Rias*</span>
<span class="t" style="left:813.1px;top:120.6px;font-size:9.60px;line-height:12.48px;color:#c8c8c8;letter-spacing:-0.102px;">Int-meja TV</span>
<span class="t" style="left:911.5px;top:120.6px;font-size:9.60px;line-height:12.48px;color:#c8c8c8;letter-spacing:-0.060px;">Int-Meja TV2*</span>
<span class="t" style="left:1009.9px;top:120.6px;font-size:9.60px;line-height:12.48px;color:#c8c8c8;letter-spacing:-0.121px;">Int-Meja TV3</span>
<span class="t" style="left:1108.3px;top:120.6px;font-size:9.60px;line-height:12.48px;color:#c8c8c8;letter-spacing:0.168px;">Int-Meja</span>
<span class="t" style="left:1206.7px;top:120.6px;font-size:9.60px;line-height:12.48px;color:#c8c8c8;letter-spacing:0.097px;">Int-Meja2*</span>
<span class="t" style="left:1305.2px;top:120.6px;font-size:9.60px;line-height:12.48px;color:#c8c8c8;letter-spacing:0.127px;">Int-Meja3*</span>
<span class="t" style="left:1403.6px;top:120.6px;font-size:9.60px;line-height:12.48px;color:#ffffff;letter-spacing:0.127px;">Int-Meja4*</span>
<span class="t" style="left:2.6px;top:143.9px;font-size:9.40px;line-height:12.22px;color:#d6d6d6;letter-spacing:0.243px;">[−][Top][2D Wireframe]</span>
<span class="t" style="left:372.5px;top:735.7px;font-size:9.30px;line-height:12.09px;color:#dcdcdc;letter-spacing:0.006px;font-family:Liberation Mono,monospace;">Autodesk DWG. &nbsp;This file is a TrustedDWG last saved by an Autodesk application or Autodesk licensed application.</span>
<span class="t" style="left:372.5px;top:751.5px;font-size:9.30px;line-height:12.09px;color:#f0f0f0;letter-spacing:-0.018px;font-family:Liberation Mono,monospace;">Command:</span>
<span class="t" style="left:372.5px;top:767.5px;font-size:9.30px;line-height:12.09px;color:#f0f0f0;letter-spacing:-0.018px;font-family:Liberation Mono,monospace;">Command:</span>
<span class="t" style="left:395.4px;top:785.5px;font-size:9.30px;line-height:12.09px;color:#8c8c8c;letter-spacing:-0.072px;font-family:Liberation Mono,monospace;font-style:italic;">Type a command</span>
<span class="t" style="left:18.4px;top:802.9px;font-size:9.80px;line-height:12.74px;color:#ffffff;letter-spacing:-0.002px;font-weight:bold;">Model</span>
<span class="t" style="left:64.8px;top:803.1px;font-size:9.60px;line-height:12.48px;color:#b4b4b4;letter-spacing:-0.192px;">Layout1</span>
<span class="t" style="left:1090.0px;top:808.4px;font-size:9.00px;line-height:11.70px;color:#f0f0f0;letter-spacing:-0.203px;">MODEL</span>
<span class="t" style="left:1377.0px;top:808.2px;font-size:8.20px;line-height:10.66px;color:#e6e6e6;letter-spacing:-0.264px;">1:1</span>
<span class="t" style="left:1240.0px;top:729.6px;font-size:9.80px;line-height:12.74px;color:#000000;letter-spacing:-0.209px;font-weight:bold;">3D Display Performance Notification</span>
<span class="t" style="left:1236.8px;top:747.6px;font-size:9.40px;line-height:12.22px;color:#1a1a1a;letter-spacing:0.029px;">Enhanced 3D performance is not available for the current visual style.</span>
<span class="t" style="left:1236.8px;top:759.7px;font-size:9.40px;line-height:12.22px;color:#1a1a1a;letter-spacing:-0.058px;">The required settings are listed here:</span>
<span class="t" style="left:1236.8px;top:776.1px;font-size:9.40px;line-height:12.22px;color:#3a3aff;letter-spacing:-0.373px;text-decoration:underline;">VISUALSTYLES Command</span>
<span class="t" style="left:1455.2px;top:215.7px;font-size:11.60px;line-height:15.08px;color:#505050;font-weight:bold;transform-origin:0 50%;transform:scaleX(.77);">TOP</span>
<span class="t" style="left:1448.5px;top:294.6px;font-size:8.60px;line-height:11.18px;color:#5c5c5c;letter-spacing:-0.421px;">WCS</span>
<span class="t" style="left:501.3px;top:360.4px;font-size:13.00px;line-height:16.90px;color:#14be14;letter-spacing:1.096px;">5&#x27;−11&quot;</span>
<span class="t" style="left:281.5px;top:271.9px;font-size:13.00px;line-height:16.90px;color:#14be14;letter-spacing:1.286px;transform:rotate(-90deg);">2&#x27;−1/8&quot;</span>
<span class="t" style="left:230.3px;top:539.5px;font-size:13.00px;line-height:16.90px;color:#14be14;letter-spacing:1.069px;transform:rotate(-90deg);">3&#x27;−0&quot;</span>
<span class="t" style="left:281.8px;top:459.1px;font-size:13.00px;line-height:16.90px;color:#14be14;letter-spacing:0.870px;transform:rotate(-90deg);">4&quot;</span>
<span class="t" style="left:281.8px;top:492.6px;font-size:13.00px;line-height:16.90px;color:#14be14;letter-spacing:0.870px;transform:rotate(-90deg);">9&quot;</span>
<span class="t" style="left:281.8px;top:540.0px;font-size:13.00px;line-height:16.90px;color:#14be14;letter-spacing:0.870px;transform:rotate(-90deg);">9&quot;</span>
<span class="t" style="left:281.8px;top:587.4px;font-size:13.00px;line-height:16.90px;color:#14be14;letter-spacing:0.870px;transform:rotate(-90deg);">9&quot;</span>
<span class="t" style="left:281.8px;top:622.0px;font-size:13.00px;line-height:16.90px;color:#14be14;letter-spacing:0.870px;transform:rotate(-90deg);">4&quot;</span>
<span class="t" style="left:416.4px;top:659.9px;font-size:13.00px;line-height:16.90px;color:#14be14;letter-spacing:1.069px;">3&#x27;−0&quot;</span>
<span class="t" style="left:594.2px;top:659.9px;font-size:13.00px;line-height:16.90px;color:#14be14;letter-spacing:1.069px;">3&#x27;−0&quot;</span>
<span class="t" style="left:501.3px;top:682.9px;font-size:13.00px;line-height:16.90px;color:#14be14;letter-spacing:1.096px;">5&#x27;−11&quot;</span>
<span class="t" style="left:1383.4px;top:2.7px;font-size:10.50px;line-height:13.65px;color:#2a2a6a;letter-spacing:-0.422px;font-weight:bold;">?</span>
<span class="t" style="left:389.6px;top:34.2px;font-size:32.50px;line-height:42.25px;color:#e2e2e2;letter-spacing:-0.288px;">A</span>
<span class="t" style="left:1458.9px;top:168.3px;font-size:17.50px;line-height:22.75px;color:#bdbdbd;font-weight:bold;transform-origin:0 50%;transform:scaleX(.83);">N</span>
<span class="t" style="left:1459.1px;top:258.1px;font-size:17.50px;line-height:22.75px;color:#bdbdbd;font-weight:bold;transform-origin:0 50%;transform:scaleX(.88);">S</span>
<span class="t" style="left:1410.8px;top:213.1px;font-size:17.50px;line-height:22.75px;color:#bdbdbd;font-weight:bold;transform-origin:0 50%;transform:scaleX(1);">W</span>
<span class="t" style="left:1503.5px;top:213.1px;font-size:17.50px;line-height:22.75px;color:#bdbdbd;font-weight:bold;transform-origin:0 50%;transform:scaleX(.97);">E</span>

</div>
</body>
</html>
